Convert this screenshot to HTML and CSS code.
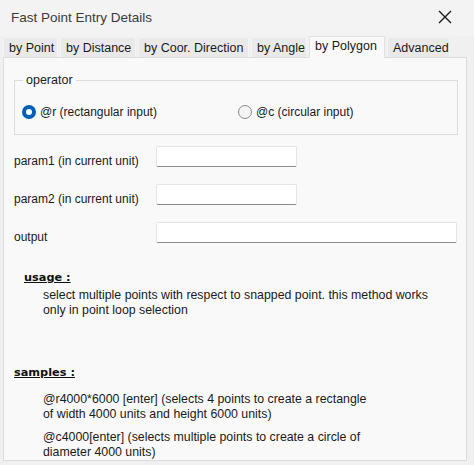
FILE: index.html
```html
<!DOCTYPE html>
<html>
<head>
<meta charset="utf-8">
<link rel="stylesheet" href="styles.css">
</head>
<body>
<div class="window">
  <div class="titlebar">
    <span class="title">Fast Point Entry Details</span>
    <svg class="close" width="14" height="14" viewBox="0 0 14 14"><path d="M1 1 L13 13 M13 1 L1 13" stroke="#1b1b1b" stroke-width="1.4" fill="none"/></svg>
  </div>
  <div class="tabs">
    <div class="tab t1">by Point</div>
    <div class="tab t2">by Distance</div>
    <div class="tab t3">by Coor. Direction</div>
    <div class="tab t4">by Angle</div>
    <div class="tab active t5">by Polygon</div>
    <div class="tab t6">Advanced</div>
  </div>
  <div class="panel">
    <fieldset class="group">
      <legend>operator</legend>
      <div class="radios">
        <label class="radio r1"><span class="dot checked"></span>@r (rectangular input)</label>
        <label class="radio r2"><span class="dot"></span>@c (circular input)</label>
      </div>
    </fieldset>
    <div class="fields">
      <div class="row"><span class="lbl">param1 (in current unit)</span><span class="input short"></span></div>
      <div class="row"><span class="lbl">param2 (in current unit)</span><span class="input short"></span></div>
      <div class="row"><span class="lbl">output</span><span class="input long"></span></div>
    </div>
    <div class="usage">
      <div class="head usage-head">usage :</div>
      <div class="body">select multiple points with respect to snapped point. this method works<br>only in point loop selection</div>
    </div>
    <div class="samples">
      <div class="head">samples :</div>
      <div class="body s1">@r4000*6000 [enter] (selects 4 points to create a rectangle<br>of width 4000 units and height 6000 units)</div>
      <div class="body s2">@c4000[enter] (selects multiple points to create a circle of<br>diameter 4000 units)</div>
    </div>
  </div>
</div>
</body>
</html>
```

FILE: styles.css
```css
html, body {
  margin: 0;
  padding: 0;
  background: #f0f0f0;
}
.window {
  width: 474px;
  height: 465px;
  background: #f0f0f0;
  font-family: "Liberation Sans", Arial, sans-serif;
  font-size: 12px;
  color: #1a1a1a;
  overflow: hidden;
}
.titlebar {
  height: 36px;
  background: #f3f3f3;
  display: flex;
  align-items: center;
  justify-content: space-between;
  padding: 0 22px 0 11px;
}
.title {
  font-size: 13.5px;
  color: #3a3a3a;
  margin-top: -2px;
}
.close {
  margin-top: -2px;
}
.tabs {
  display: flex;
  align-items: flex-end;
  height: 21px;
  padding-left: 3px;
  gap: 2px;
  font-size: 12.5px;
}
.tab {
  height: 20px;
  line-height: 21px;
  padding: 0 5px;
  background: #e9e9e9;
  border: 1px solid #f4f4f4;
  border-bottom: none;
  box-sizing: border-box;
  white-space: nowrap;
}
.tab.active {
  height: 22px;
  line-height: 18px;
  background: #f9f9f9;
  border: 1px solid #e2e2e2;
  border-bottom: none;
  margin-bottom: -1px;
  position: relative;
  z-index: 1;
}
.t1 { width: 55px; }
.t2 { width: 76px; }
.t3 { width: 111px; }
.t4 { width: 56px; }
.t5 { width: 76px; }
.t6 { width: 63px; }
.panel {
  margin-left: 3px;
  width: 464px;
  height: 404px;
  box-sizing: border-box;
  background: #f9f9f9;
  border: 1px solid #dcdcdc;
  padding: 15px 8px 0 10px;
}
.group {
  margin: 0;
  border: 1px solid #dcdcdc;
  padding: 0 0 15px 7px;
  min-width: 0;
}
.group legend {
  padding: 0 3px;
  font-size: 12.5px;
  margin-left: 1px;
  color: #222;
}
.radios {
  display: flex;
  margin-top: 17px;
  height: 15px;
  align-items: center;
}
.radio {
  display: flex;
  align-items: center;
  gap: 4px;
  font-size: 12px;
}
.r1 { width: 216px; }
.dot {
  width: 14px;
  height: 14px;
  border-radius: 50%;
  box-sizing: border-box;
  border: 1px solid #8a8a8a;
  background: #f4f4f4;
}
.dot.checked {
  border: 4px solid #005fb8;
  background: #ffffff;
}
.fields {
  margin-top: 11px;
  display: flex;
  flex-direction: column;
  gap: 17px;
}
.row {
  display: flex;
  align-items: center;
  height: 21px;
}
.lbl {
  width: 142px;
  padding-top: 9px;
  font-size: 12px;
  white-space: nowrap;
}
.input {
  height: 21px;
  box-sizing: border-box;
  background: #ffffff;
  border: 1px solid #e4e4e4;
  border-bottom: 1px solid #8a8a8a;
  border-radius: 2px;
}
.input.short { width: 141px; }
.input.long { width: 301px; }
.usage {
  margin-top: 28px;
  padding-left: 10px;
}
.head {
  font-family: "DejaVu Sans", Verdana, sans-serif;
  font-weight: bold;
  font-size: 11.3px;
  text-decoration: underline;
  color: #111;
  line-height: 14px;
}
.body {
  padding-left: 19px;
  line-height: 15px;
  font-size: 12.35px;
  white-space: nowrap;
  color: #1a1a1a;
}
.usage .body { margin-top: 3px; }
.samples {
  margin-top: 48px;
}
.samples .body { padding-left: 29px; }
.s1 { margin-top: 12px; }
.s2 { margin-top: 8px; }
```
